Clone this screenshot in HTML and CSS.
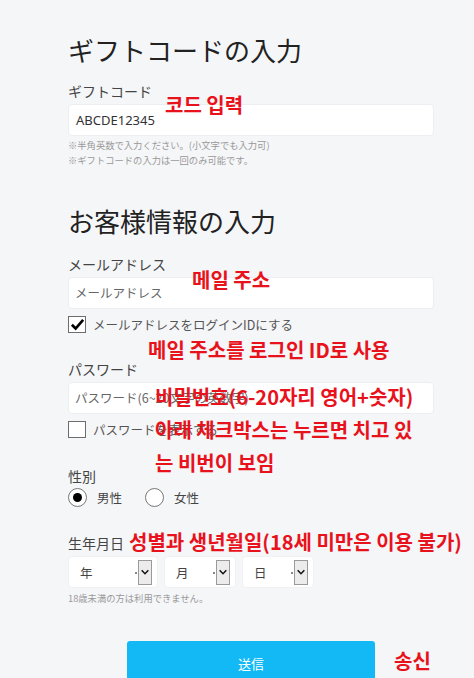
FILE: index.html
```html
<!DOCTYPE html>
<html lang="ja">
<head>
    <meta charset="UTF-8">
    <meta name="viewport" content="width=device-width, initial-scale=1.0">
    <title>ギフトコードの入力</title>
    <link rel="stylesheet" href="styles.css">
</head>
<body>
    <div class="page">
        <h2 class="section-title first">ギフトコードの入力</h2>

        <div class="field">
            <label class="field-label">ギフトコード</label>
            <div class="text-box code">ABCDE12345</div>
            <p class="note">※半角英数で入力ください。(小文字でも入力可)</p>
            <p class="note">※ギフトコードの入力は一回のみ可能です。</p>
        </div>

        <h2 class="section-title">お客様情報の入力</h2>

        <div class="field">
            <label class="field-label">メールアドレス</label>
            <div class="text-box">メールアドレス</div>
            <div class="check-row">
                <span class="check-box">
                    <svg viewBox="0 0 16 16" width="15" height="15"><path d="M2 8.3 L6 12.3 L14 3" fill="none" stroke="#000" stroke-width="2.8"/></svg>
                </span>
                <span>メールアドレスをログインIDにする</span>
            </div>
        </div>

        <div class="field pw">
            <label class="field-label">パスワード</label>
            <div class="text-box">パスワード(6~20文字の英数字)</div>
            <div class="check-row">
                <span class="check-box"></span>
                <span>パスワードを表示する</span>
            </div>
        </div>

        <div class="field gender">
            <label class="field-label">性別</label>
            <div class="radio-row">
                <span class="radio on"></span><span class="radio-text">男性</span>
                <span class="radio"></span><span class="radio-text">女性</span>
            </div>
        </div>

        <div class="field birth">
            <label class="field-label">生年月日</label>
            <div class="select-row">
                <div class="select year"><span>年</span><span class="arrow"><svg viewBox="0 0 12 12" width="10" height="10"><path d="M2 4 L6 8 L10 4" fill="none" stroke="#111" stroke-width="1.8"/></svg></span></div>
                <div class="select month"><span>月</span><span class="arrow"><svg viewBox="0 0 12 12" width="10" height="10"><path d="M2 4 L6 8 L10 4" fill="none" stroke="#111" stroke-width="1.8"/></svg></span></div>
                <div class="select day"><span>日</span><span class="arrow"><svg viewBox="0 0 12 12" width="10" height="10"><path d="M2 4 L6 8 L10 4" fill="none" stroke="#111" stroke-width="1.8"/></svg></span></div>
            </div>
            <p class="note">18歳未満の方は利用できません。</p>
        </div>

        <div class="submit-wrap">
            <button class="submit-btn">送信</button>
        </div>

        <!-- annotations drawn on top of the form -->
        <span class="memo" style="left: 165px; top: 93px;">코드 입력</span>
        <span class="memo" style="left: 192px; top: 268px;">메일 주소</span>
        <span class="memo" style="left: 148px; top: 338px;">메일 주소를 로그인 ID로 사용</span>
        <span class="memo" style="left: 155px; top: 385px;">비밀번호(6-20자리 영어+숫자)</span>
        <span class="memo" style="left: 155px; top: 418px;">아래 체크박스는 누르면 치고 있</span>
        <span class="memo" style="left: 155px; top: 451px;">는 비번이 보임</span>
        <span class="memo" style="left: 129px; top: 530px;">성별과 생년월일(18세 미만은 이용 불가)</span>
        <span class="memo" style="left: 394px; top: 649px;">송신</span>
    </div>
</body>
</html>
```

FILE: styles.css
```css
* {
    margin: 0;
    padding: 0;
    box-sizing: border-box;
}

body {
    font-family: "Noto Sans CJK JP", "Noto Sans", sans-serif;
    background: #f5f6f8;
    color: #333;
    overflow: hidden;
}

.page {
    position: relative;
    width: 474px;
    height: 678px;
    padding: 35px 40px 0 68px;
    overflow: hidden;
}

.section-title {
    font-size: 26px;
    font-weight: 400;
    color: #222;
    line-height: 30px;
    margin-top: 38px;
    margin-bottom: 18px;
}

.section-title.first {
    margin-top: 0;
    margin-bottom: 16px;
}

.field-label {
    display: block;
    font-size: 14px;
    color: #444;
    line-height: 20px;
    margin-bottom: 3px;
}

.text-box {
    width: 366px;
    height: 32px;
    background: #fff;
    border: 1px solid #eceef1;
    border-radius: 4px;
    padding: 0 6px;
    font-size: 12.5px;
    line-height: 30px;
    color: #666;
}

.text-box.code {
    color: #333;
    font-size: 13px;
    padding-left: 7px;
    font-family: "Noto Sans", sans-serif;
}

.note {
    font-size: 9.3px;
    color: #999;
    line-height: 15px;
}

.text-box + .note {
    margin-top: 2px;
}

.check-row {
    display: flex;
    align-items: center;
    gap: 7px;
    margin-top: 6px;
    font-size: 12.5px;
    color: #555;
    height: 18px;
}

.check-box {
    width: 18px;
    height: 17px;
    border: 1px solid #6d6d6d;
    background: #fff;
    display: flex;
    align-items: center;
    justify-content: center;
}

.pw {
    margin-top: 26px;
}

.gender {
    margin-top: 28px;
}

.radio-row {
    display: flex;
    align-items: center;
    height: 20px;
    margin-top: -2px;
}

.radio {
    width: 19px;
    height: 19px;
    border: 1px solid #767676;
    border-radius: 50%;
    background: #fff;
    position: relative;
}

.radio.on::after {
    content: "";
    position: absolute;
    left: 4px;
    top: 4px;
    width: 9px;
    height: 9px;
    border-radius: 50%;
    background: #000;
}

.radio-text {
    font-size: 12.5px;
    color: #444;
    margin: 0 23px 0 10px;
}

.birth {
    margin-top: 26px;
}

.select-row {
    display: flex;
    gap: 6px;
    margin-top: 0;
}

.select {
    height: 32px;
    background: #fff;
    border-radius: 4px;
    border: 1px solid #f0f1f3;
    display: flex;
    align-items: center;
    justify-content: space-between;
    padding: 0 5px 0 11px;
    font-size: 12.5px;
    color: #444;
}

.select.year { width: 90px; }
.select.month { width: 72px; }
.select.day { width: 72px; }

.arrow {
    width: 14px;
    height: 25px;
    border: 1px solid #9a9a9a;
    background: #ececec;
    display: flex;
    align-items: center;
    justify-content: center;
    position: relative;
}

.arrow::before {
    content: "";
    position: absolute;
    left: -4px;
    top: 11px;
    width: 2px;
    height: 2px;
    background: #888;
}

.birth .note {
    margin-top: 3px;
}

.submit-wrap {
    margin-top: 35px;
    padding-left: 59px;
}

.submit-btn {
    display: block;
    width: 248px;
    height: 44px;
    background: #12b9f5;
    color: #fff;
    border: none;
    border-radius: 3px;
    font-family: "Noto Sans CJK JP", sans-serif;
    font-size: 13px;
}

.memo {
    position: absolute;
    font-family: "Noto Sans CJK KR", sans-serif;
    font-weight: 700;
    font-size: 20px;
    line-height: 24px;
    color: #e8121c;
    white-space: nowrap;
}
```
